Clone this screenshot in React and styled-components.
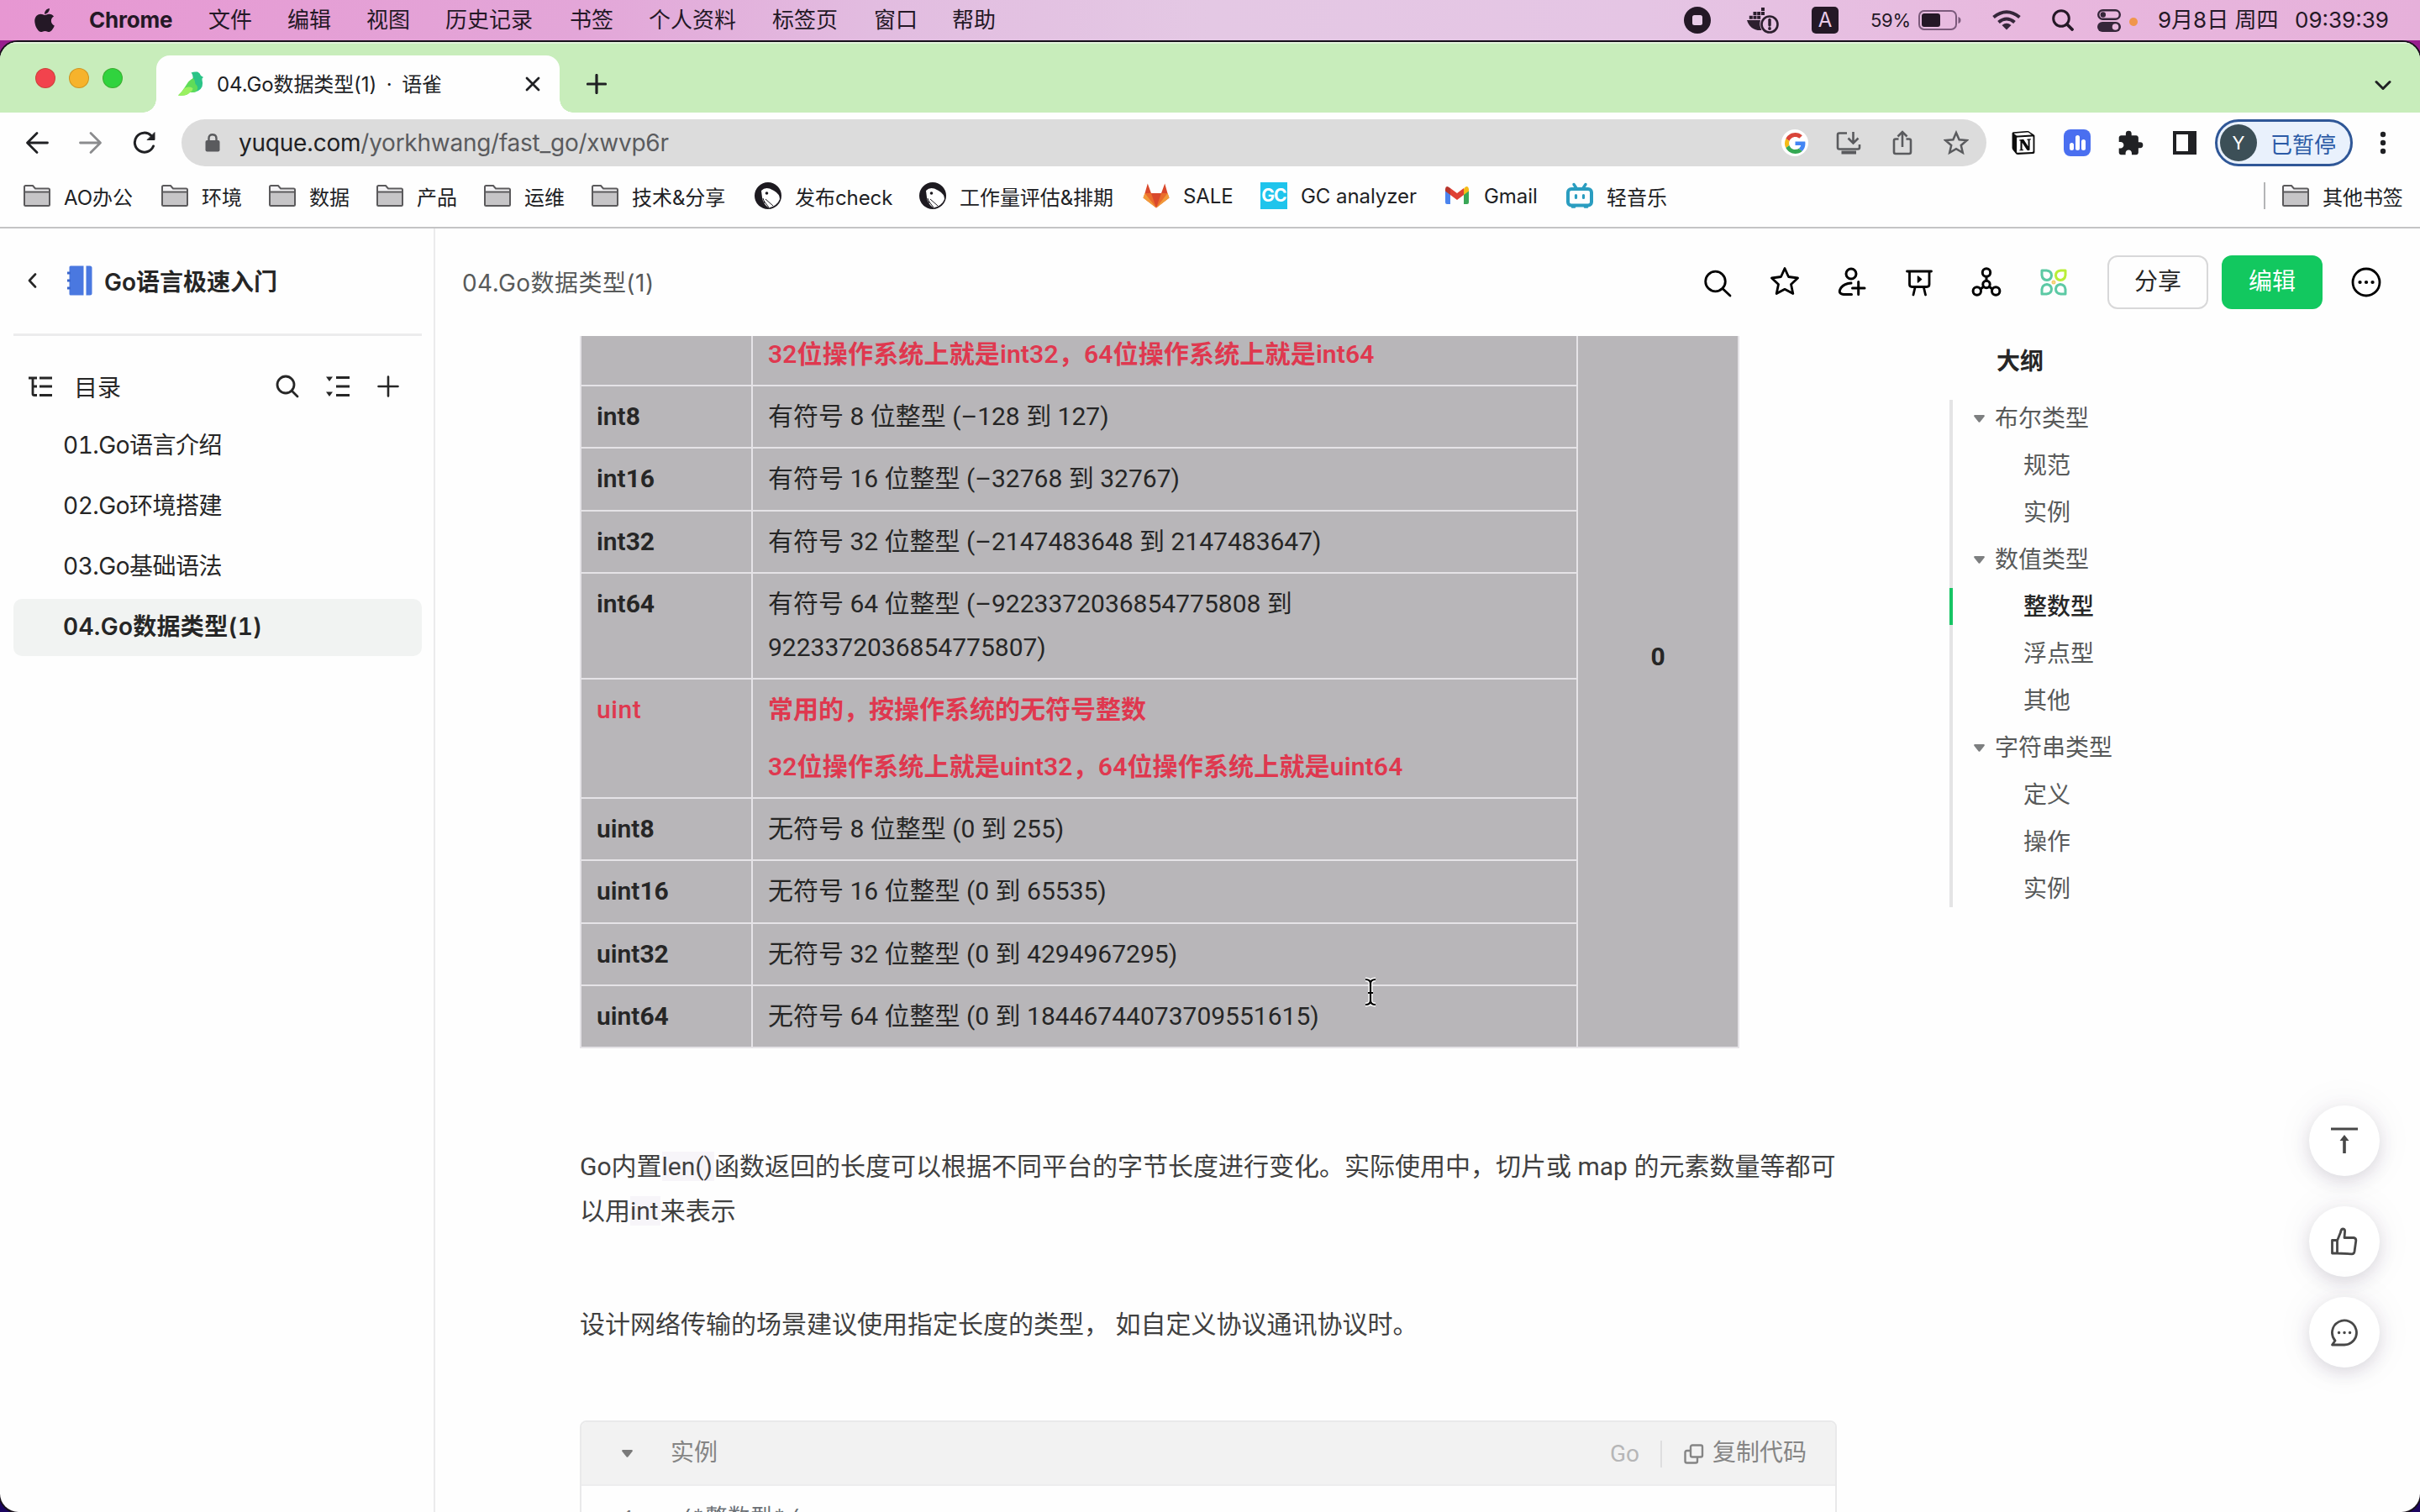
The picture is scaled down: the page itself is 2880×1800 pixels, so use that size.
import React from 'react'
import styled, { createGlobalStyle } from 'styled-components'
import { FaApple } from 'react-icons/fa'
import { SiNotion } from 'react-icons/si'

const GlobalStyle = createGlobalStyle`
    * {
        box-sizing: border-box;
    }
    html, body {
        margin: 0;
        padding: 0;
        overflow: hidden;
    }
    svg {
        display: block;
        flex: none;
    }
`

const ui = `Inter, "Noto Sans CJK SC", sans-serif`
const doc = `Roboto, "Noto Sans CJK SC", sans-serif`

const Desktop = styled.div`
    width: 2880px;
    height: 1800px;
    display: flex;
    flex-direction: column;
    overflow: hidden;
    background: linear-gradient(180deg, #a01496 0%, #8a2f7f 8%, #1e0a5c 60%, #1c0560 100%);
    font-family: ${ui};
    color: #202124;
    white-space: nowrap;
`

/* ---------- mac menu bar ---------- */
const MenuBar = styled.div`
    height: 48px;
    flex: none;
    display: flex;
    align-items: center;
    padding-left: 37px;
    background: linear-gradient(90deg, #e797d2 0%, #e3a6d8 24%, #e2bce0 36%, #e4c8e4 50%, #e5c5e4 68%, #e8b8de 84%, #e6b0da 100%);
    color: #241826;
`
const MenuItem = styled.span`
    width: ${p => p.$w}px;
    font-size: 26px;
    line-height: 46px;
    padding-bottom: 1px;
    font-weight: ${p => (p.$bold ? 700 : 400)};
    letter-spacing: ${p => (p.$bold ? '-0.2px' : 0)};
`
const Tray = styled.div`
    display: flex;
    align-items: center;
    margin-left: auto;
    width: 876px;
    height: 48px;
`
const TrayItem = styled.div`
    flex: none;
    margin-left: ${p => p.$ml || 0}px;
    width: ${p => p.$w}px;
    font-size: ${p => p.$size || 26}px;
    line-height: 46px;
    letter-spacing: ${p => p.$ls || 0}px;
`
const InputSource = styled.div`
    margin-left: 39px;
    width: 32px;
    height: 32px;
    border-radius: 5px;
    background: #241826;
    color: #e8cbe8;
    font-size: 24px;
    line-height: 32px;
    text-align: center;
`
const Dot = styled.div`
    margin-left: 10px;
    margin-top: 4px;
    width: 10px;
    height: 10px;
    border-radius: 50%;
    background: #f0964b;
`

/* ---------- browser chrome ---------- */
const Window = styled.div`
    flex: none;
    margin-top: 2px;
    height: 1750px;
    border-radius: 21px 21px 22px 22px;
    overflow: hidden;
    background: #fefefe;
    box-shadow: 0 0 0 2px #17101a;
    display: flex;
    flex-direction: column;
`
const TabStrip = styled.div`
    height: 84px;
    flex: none;
    display: flex;
    background: #c8edbb;
    border-top: 2px solid #e3f3dc;
`
const Lights = styled.div`
    display: flex;
    gap: 16px;
    padding: 29px 0 0 42px;
    width: 186px;
`
const Light = styled.span`
    width: 24px;
    height: 24px;
    border-radius: 50%;
    background: ${p => p.$c};
    border: 1px solid rgba(90, 60, 0, 0.25);
`
const Tab = styled.div`
    position: relative;
    margin-top: 14px;
    width: 480px;
    height: 68px;
    display: flex;
    align-items: center;
    padding-left: 25px;
    background: #fefefe;
    border-radius: 16px 16px 0 0;

    &::before, &::after {
        content: '';
        position: absolute;
        bottom: 0;
        width: 16px;
        height: 16px;
    }
    &::before {
        left: -16px;
        background: radial-gradient(circle at 0 0, transparent 15.5px, #fefefe 16px);
    }
    &::after {
        right: -16px;
        background: radial-gradient(circle at 100% 0, transparent 15.5px, #fefefe 16px);
    }
`
const TabTitle = styled.span`
    margin-left: 15px;
    width: 366px;
    font-size: 24px;
    letter-spacing: -0.1px;
    word-spacing: 5px;
    padding-bottom: 3px;
`
const NewTab = styled.div`
    padding: 36px 0 0 32px;
`
const TabSearch = styled.div`
    margin-left: auto;
    padding: 43px 34px 0 0;
`
const Toolbar = styled.div`
    height: 72px;
    flex: none;
    display: flex;
    align-items: center;
    padding-left: 12px;
`
const Slot = styled.div`
    width: ${p => p.$w || 64}px;
    height: 56px;
    flex: none;
    display: flex;
    align-items: center;
    justify-content: center;
`
const Omnibox = styled.div`
    width: 2148px;
    height: 56px;
    margin: 0 12px;
    padding: 0 4px 0 28px;
    border-radius: 28px;
    background: #dcdcdc;
    display: flex;
    align-items: center;
    flex: none;
`
const Url = styled.div`
    margin-left: 22px;
    flex: 1;
    font-size: 28px;
    letter-spacing: -0.26px;
    color: #5a5b5e;

    b {
        font-weight: 400;
        color: #202124;
    }
`
const GoogleBadge = styled.div`
    width: 32px;
    height: 32px;
    border-radius: 50%;
    background: #fff;
    display: flex;
    align-items: center;
    justify-content: center;
`
const StatsExtension = styled.div`
    width: 32px;
    height: 32px;
    border-radius: 8px;
    background: #4a6ff0;
    display: flex;
    align-items: flex-end;
    justify-content: center;
    gap: 2px;
    padding-bottom: 7px;

    i {
        width: 5px;
        border-radius: 3px;
        background: #fff;
    }
    i:nth-child(1) { height: 9px; }
    i:nth-child(2) { height: 18px; }
    i:nth-child(3) { height: 13px; }
`
const Profile = styled.div`
    width: 164px;
    height: 56px;
    margin-left: 4px;
    border: 3px solid #2f5797;
    border-radius: 28px;
    background: #e9f1fc;
    color: #2b5aa6;
    display: flex;
    align-items: center;
    padding-left: 3px;
    font-size: 26px;
    gap: 16px;
`
const Avatar = styled.span`
    width: 44px;
    height: 44px;
    border-radius: 50%;
    background: #3c4f57;
    color: #fff;
    font-size: 22px;
    line-height: 44px;
    text-align: center;
`
const Bookmarks = styled.div`
    height: 66px;
    flex: none;
    display: flex;
    align-items: center;
    padding: 0 0 10px 28px;
    border-bottom: 2px solid #c4c4c5;
`
const Bookmark = styled.div`
    width: ${p => p.$w}px;
    height: 40px;
    flex: none;
    display: flex;
    align-items: center;
    gap: 16px;
    font-size: 24px;
    letter-spacing: -0.06px;
`
const GcLogo = styled.span`
    width: 32px;
    height: 32px;
    background: #1fc4ec;
    color: #fff;
    font-size: 21px;
    font-weight: 700;
    line-height: 32px;
    letter-spacing: -1px;
    text-align: center;
`
const OtherBookmarks = styled(Bookmark)`
    margin-left: auto;
    height: 32px;
    border-left: 2px solid #b4b5b6;
    padding-left: 20px;
`

/* ---------- page ---------- */
const Page = styled.div`
    flex: 1;
    display: flex;
    min-height: 0;
`
const Sidebar = styled.div`
    width: 518px;
    flex: none;
    border-right: 2px solid #ebebec;
    padding: 0 14px 0 16px;
    color: #262626;
`
const BookHeader = styled.div`
    height: 128px;
    display: flex;
    align-items: center;
    padding: 0 0 1px 17px;
    border-bottom: 3px solid #ececed;
    font-size: 28px;
    font-weight: 600;

    svg + svg {
        margin: 0 14px 0 36px;
    }
`
const CatalogBar = styled.div`
    height: 74px;
    margin-top: 23px;
    display: flex;
    align-items: center;
    padding: 0 10px 0 17px;
    font-size: 28px;

    span {
        flex: 1;
        margin-left: 25px;
        padding-bottom: 1px;
    }
`
const CatalogIcons = styled.div`
    display: flex;
    align-items: center;
    gap: 31px;
    margin-right: 17px;

    svg:nth-child(-n + 2) {
        margin-left: -1px;
        margin-right: 1px;
    }
`
const CatalogItem = styled.div`
    height: 68px;
    margin-bottom: 4px;
    padding-left: 59px;
    border-radius: 10px;
    font-size: 28px;
    line-height: 67px;
    font-feature-settings: 'tnum';
    letter-spacing: ${p => (p.$active ? 0.3 : -0.5)}px;
    background: ${p => (p.$active ? '#f1f3f2' : 'none')};
    font-weight: ${p => (p.$active ? 600 : 400)};
`
const Main = styled.div`
    position: relative;
    flex: 1;
    display: flex;
    flex-direction: column;
    min-width: 0;
`
const DocHeader = styled.div`
    height: 128px;
    flex: none;
    display: flex;
    align-items: center;
    padding-left: 32px;
    padding-right: 12px;
`
const Crumb = styled.div`
    flex: 1;
    padding-bottom: 3px;
    font-size: 28px;
    letter-spacing: 0.45px;
    color: #585a5a;
`
const Button = styled.div`
    width: 120px;
    height: 64px;
    margin-left: ${p => (p.$primary ? 16 : 24)}px;
    border-radius: 12px;
    border: ${p => (p.$primary ? 'none' : '2px solid #d8d8d9')};
    background: ${p => (p.$primary ? '#12c85f' : '#fefefe')};
    color: ${p => (p.$primary ? '#fff' : '#262626')};
    font-size: 28px;
    line-height: ${p => (p.$primary ? 62 : 58)}px;
    text-align: center;
`
const Body = styled.div`
    flex: 1;
    min-height: 0;
    overflow: hidden;
    display: flex;
    padding-left: 172px;
`
const Article = styled.div`
    width: 1496px;
    flex: none;
    font-family: ${doc};
    font-size: 30px;
    line-height: 52.5px;
    color: #404040;
`
const Table = styled.table`
    width: 1380px;
    table-layout: fixed;
    border-collapse: collapse;
    color: #262626;
    background: #b8b6b9;
`
const Cell = styled.td`
    height: ${p => p.$h}px;
    padding: ${p => (p.$cut ? '0 18px 9px' : '10px 18px 8px')};
    border: 2px solid #e5e3e7;
    border-top: ${p => (p.$cut ? 'none' : '2px solid #e5e3e7')};
    vertical-align: top;
    font-weight: ${p => (p.$bold ? 700 : 400)};
    white-space: normal;
    line-height: 52px;
`
const DefaultCell = styled(Cell)`
    padding-bottom: 82px;
    vertical-align: middle;
    text-align: center;
`
const Line = styled.div`
    color: #df384f;
    font-weight: ${p => p.$weight};
    letter-spacing: ${p => p.$ls || 0}px;
    margin-top: ${p => p.$mt || 0}px;
`
const TypeName = styled.span`
    font-weight: 600;
`
const Paragraph = styled.p`
    margin: ${p => p.$mt}px -8px 0 0;
    white-space: normal;

    mark {
        background: #f7f5f9;
        color: inherit;
        padding-right: 2px;
    }
`
const CodeBlock = styled.div`
    margin-top: 87px;
    height: 300px;
    border: 2px solid #e9e9ea;
    border-radius: 8px 8px 0 0;
`
const CodeHeader = styled.div`
    height: 76px;
    display: flex;
    align-items: center;
    padding: 2px 34px 0 47px;
    background: #f2f2f2;
    border-bottom: 2px solid #ededee;
    border-radius: 6px 6px 0 0;
    font-size: 28px;
    color: #858585;

    span {
        flex: 1;
        margin-left: 44px;
    }
`
const Lang = styled.div`
    height: 32px;
    line-height: 32px;
    padding-right: 25px;
    margin-right: 26px;
    border-right: 2px solid #dededf;
    color: #b6b6b7;
`
const CopyCode = styled.div`
    margin-left: 10px;
`
const CodeLine = styled.div`
    display: flex;
    padding: 13px 0 0 48px;
    font-family: "Liberation Mono", "Noto Sans CJK SC", monospace;
    font-size: 26px;
    line-height: 52px;
    letter-spacing: 0.7px;
    color: #6b7075;

    span {
        width: 67px;
        color: #777;
    }
`
const Outline = styled.div`
    margin-left: 134px;
    color: #585a5a;
    font-size: 28px;
`
const OutlineTitle = styled.div`
    padding-left: 56px;
    height: 76px;
    line-height: 60px;
    font-weight: 700;
    color: #262626;
`
const OutlineList = styled.div`
    height: 604px;
    box-shadow: inset 4px 0 0 #e4e4e5;
`
const OutlineItem = styled.div`
    height: 56px;
    display: flex;
    align-items: center;
    padding: 0 0 16px ${p => (p.$sub ? 88 : 28)}px;
    gap: 11px;
    color: ${p => (p.$active ? '#262626' : 'inherit')};
    font-weight: ${p => (p.$active ? 500 : 400)};
    background: ${p => (p.$active ? 'linear-gradient(#16c464, #16c464) 0 0 / 4px 44px no-repeat' : 'none')};

    svg {
        margin-top: 4px;
    }
`
const FloatButton = styled.div`
    position: absolute;
    right: 48px;
    top: ${p => p.$top}px;
    width: 84px;
    height: 84px;
    border-radius: 50%;
    background: #fff;
    box-shadow: 0 6px 20px rgba(60, 50, 90, 0.16), 0 0 50px rgba(60, 50, 90, 0.06);
    display: flex;
    align-items: center;
    justify-content: center;
`
const TextCursor = styled.svg`
    position: absolute;
    left: 1103px;
    top: 891px;
`

const Stroke = ({ w = 32, h = w, sw = 2.6, color = '#202124', cap = 'round', children }) => (
    <svg width={w} height={h} viewBox={`0 0 ${w} ${h}`} fill="none" stroke={color} strokeWidth={sw} strokeLinecap={cap} strokeLinejoin={cap === 'round' ? 'round' : 'miter'}>
        {children}
    </svg>
)

const Folder = () => (
    <svg width="32" height="26" viewBox="0 0 32 26">
        <path d="M1 4V2.500Q1 1 2.500 1H11L14 4.500H29.500Q31 4.500 31 6V23.500Q31 25 29.500 25H2.500Q1 25 1 23.500Z" fill="#f3f2f4" stroke="#5b5a5c" strokeWidth="2" />
        <path d="M2 9H30V24H2Z" fill="#c6c5c7" />
        <path d="M1 8.500H31" stroke="#5b5a5c" strokeWidth="2" />
    </svg>
)

const Lynx = () => (
    <svg width="32" height="32" viewBox="0 0 32 32">
        <circle cx="16" cy="16" r="16" fill="#1d1a20" />
        <path d="M8 10Q12 5.500 18 7.500L23 10Q30 14 30 20Q27 28 17 30.500Q10 26 9 18Z" fill="#fff" />
        <circle cx="14.500" cy="13" r="1.800" fill="#1d1a20" />
        <path d="M11 22L17 30M13 20L22 28M10 19L12 25" stroke="#1d1a20" strokeWidth="1" />
    </svg>
)

const Gitlab = () => (
    <svg width="32" height="30" viewBox="0 0 32 30">
        <path d="M5.800 0.500L10 12H22L26.200 0.500L29.500 12L16 29.500L2.500 12Z" fill="#d9482c" />
        <path d="M16 29.500L10 12H2.500L0.500 17.500Z" fill="#ea6c2b" />
        <path d="M16 29.500L22 12H29.500L31.500 17.500Z" fill="#ea6c2b" />
        <path d="M16 29.500L0.500 17.500L2.500 12Z" fill="#f19a3a" />
        <path d="M16 29.500L31.500 17.500L29.500 12Z" fill="#f19a3a" />
    </svg>
)

const Gmail = () => (
    <svg width="32" height="24" viewBox="0 0 32 24">
        <path d="M2 4V20Q2 22 4 22H8V10L2 5Z" fill="#4b84ee" />
        <path d="M24 10V22H28Q30 22 30 20V5Z" fill="#3aa757" />
        <path d="M24 4V11L30 6.500V4Q29 -1 25 2.500Z" fill="#f5bb16" />
        <path d="M2 4V6.500L8 11V3L6.500 2Q2.500 -0.500 2 4Z" fill="#b8352c" />
        <path d="M8 3V11L16 17L24 11V3L16 9Z" fill="#df4134" />
    </svg>
)

const Bili = () => (
    <svg width="32" height="32" viewBox="0 0 32 32" fill="none" stroke="#2a9dc0" strokeWidth="4" strokeLinecap="round">
        <rect x="2" y="8" width="28" height="19.500" rx="4" />
        <path d="M9 2.500L12 7M23 2.500L20 7" strokeWidth="3.400" />
        <path d="M11.500 15.500V18.500M20.500 15.500V18.500" strokeWidth="3.200" />
        <path d="M7 29.500H10M22 29.500H25" strokeWidth="2.500" />
    </svg>
)

const GoogleG = () => (
    <svg width="25" height="25" viewBox="0 0 48 48">
        <path fill="#d9453a" d="M24 9.500c3.540 0 6.710 1.220 9.210 3.600l6.850-6.850C35.900 2.380 30.470 0 24 0 14.620 0 6.510 5.380 2.560 13.220l7.980 6.190C12.430 13.720 17.740 9.500 24 9.500z" />
        <path fill="#4285f4" d="M46.980 24.550c0-1.570-.15-3.090-.38-4.550H24v9.020h12.940c-.58 2.960-2.260 5.480-4.780 7.180l7.730 6c4.510-4.180 7.090-10.360 7.090-17.650z" />
        <path fill="#f5bb16" d="M10.530 28.590c-.48-1.450-.76-2.990-.76-4.590s.27-3.140.76-4.590l-7.980-6.190C.92 16.460 0 20.120 0 24c0 3.880.92 7.540 2.560 10.780l7.970-6.190z" />
        <path fill="#34a853" d="M24 48c6.480 0 11.930-2.130 15.890-5.810l-7.730-6c-2.150 1.450-4.920 2.300-8.160 2.300-6.260 0-11.570-4.220-13.470-9.910l-7.980 6.190C6.510 42.620 14.620 48 24 48z" />
    </svg>
)

const Yuque = () => (
    <svg width="32" height="30" viewBox="0 0 32 30">
        <path d="M16.500 1.500Q20 0 24 0.500Q27 1.500 28 5L31 7Q29 8 29.500 10Q32 19 25 23Q21 25.500 15 25Q18 14 18.500 9Q19 4 16.500 1.500Z" fill="#2bc487" />
        <path d="M19 8Q21.500 11 21.500 15Q26 18 23 23.500Q20 25.500 15 25Q10 30 1 28.500Q6 24 9.500 18Q14 10 19 8Z" fill="#5fdc58" />
        <path d="M8 20.500Q13 17 18.500 20Q18 24 15 25Q10 30 1 28.500Q5 25 8 20.500Z" fill="#9af060" />
    </svg>
)

const Triangle = ({ color = '#7d7f80' }) => (
    <svg width="15" height="9" viewBox="0 0 14 9">
        <path d="M1.500 0H12.500Q14 0.500 13 2L8 8.300Q7 9.300 6 8.300L1 2Q0 0.500 1.500 0Z" fill={color} />
    </svg>
)

const menus = [
    ['文件', 94], ['编辑', 94], ['视图', 94], ['历史记录', 148], ['书签', 94],
    ['个人资料', 147], ['标签页', 121], ['窗口', 93], ['帮助', 94],
]

const folders = [
    ['AO办公', 164], ['环境', 128], ['数据', 128], ['产品', 128], ['运维', 128], ['技术&分享', 194],
]

const catalog = ['01.Go语言介绍', '02.Go环境搭建', '03.Go基础语法', '04.Go数据类型(1)']

const rows = [
    { type: 'int', bits: '8', h: 74, text: '有符号 8 位整型 (–128 到 127)' },
    { type: 'int', bits: '16', h: 75, text: '有符号 16 位整型 (–32768 到 32767)' },
    { type: 'int', bits: '32', h: 74, text: '有符号 32 位整型 (–2147483648 到 2147483647)' },
    { type: 'int', bits: '64', h: 126, text: '有符号 64 位整型 (–9223372036854775808 到 9223372036854775807)' },
    { type: 'uint', h: 142, red: ['常用的，按操作系统的无符号整数', '32位操作系统上就是uint32，64位操作系统上就是uint64'] },
    { type: 'uint', bits: '8', h: 74, text: '无符号 8 位整型 (0 到 255)' },
    { type: 'uint', bits: '16', h: 75, text: '无符号 16 位整型 (0 到 65535)' },
    { type: 'uint', bits: '32', h: 74, text: '无符号 32 位整型 (0 到 4294967295)' },
    { type: 'uint', bits: '64', h: 74, text: '无符号 64 位整型 (0 到 18446744073709551615)' },
]

const outline = [
    { text: '布尔类型' }, { text: '规范', sub: true }, { text: '实例', sub: true },
    { text: '数值类型' }, { text: '整数型', sub: true, active: true }, { text: '浮点型', sub: true }, { text: '其他', sub: true },
    { text: '字符串类型' }, { text: '定义', sub: true }, { text: '操作', sub: true }, { text: '实例', sub: true },
]

const SystemMenu = () => (
    <MenuBar>
        <TrayItem $w={69}><FaApple size={32} /></TrayItem>
        <MenuItem $w={142} $bold>Chrome</MenuItem>
        {menus.map(([label, w]) => <MenuItem key={label} $w={w}>{label}</MenuItem>)}
        <Tray>
            <TrayItem $w={32}>
                <svg width="32" height="32"><circle cx="16" cy="16" r="16" fill="#241826" /><rect x="10" y="10" width="12" height="12" rx="2.500" fill="#e8cbe8" /></svg>
            </TrayItem>
            <TrayItem $ml={43} $w={38}>
                <svg width="38" height="32" viewBox="0 0 38 32" fill="#2c1f2e">
                    <path d="M17 1h4v4h-4zM7.500 6h4v4h-4zM12.200 6h4v4h-4zM17 6h4v4h-4zM2.800 10.800h4v4h-4zM7.500 10.800h4v4h-4zM12.200 10.800h4v4h-4z" />
                    <path d="M0 16H16Q14 22 17.500 28Q4 29 0 16Z" />
                    <circle cx="27" cy="21" r="9.500" fill="none" stroke="#2c1f2e" strokeWidth="2.600" />
                    <path d="M27 15.500V22" stroke="#2c1f2e" strokeWidth="3.400" strokeLinecap="round" />
                    <circle cx="27" cy="26" r="1.900" />
                </svg>
            </TrayItem>
            <InputSource>A</InputSource>
            <TrayItem $ml={38} $w={57} $size={22} $ls={-0.3}>59%</TrayItem>
            <TrayItem $w={51}>
                <svg width="51" height="24" viewBox="0 0 51 24">
                    <rect x="1" y="1" width="44" height="22" rx="6" fill="none" stroke="#7b5a7b" strokeWidth="2" />
                    <rect x="4" y="4" width="22" height="16" rx="3" fill="#241826" />
                    <path d="M47.500 8Q50.500 9 50.500 12T47.500 16Z" fill="#7b5a7b" />
                </svg>
            </TrayItem>
            <TrayItem $ml={37} $w={34}>
                <svg width="34" height="24" viewBox="0 0 34 24" fill="none" stroke="#35263a" strokeWidth="4">
                    <path d="M1.500 8.500Q17 -4 32.500 8.500M7.500 14.500Q17 6.500 26.500 14.500" />
                    <path d="M17 23.500L11.500 18Q17 13.500 22.500 18Z" fill="#35263a" stroke="none" />
                </svg>
            </TrayItem>
            <TrayItem $ml={37} $w={26}>
                <Stroke w={26} sw={3} color="#241826"><circle cx="11" cy="11" r="9.300" /><path d="M18 18L24 24" strokeWidth="3.800" /></Stroke>
            </TrayItem>
            <TrayItem $ml={28} $w={28}>
                <svg width="28" height="27" viewBox="0 0 28 27">
                    <rect x="1.200" y="1.200" width="25.600" height="10.600" rx="5.300" fill="none" stroke="#35263a" strokeWidth="2.400" />
                    <circle cx="6.800" cy="6.500" r="3.200" fill="#35263a" />
                    <rect x="0" y="15" width="28" height="12" rx="6" fill="#35263a" />
                    <circle cx="21.500" cy="21" r="3.800" fill="#e8b8de" />
                </svg>
            </TrayItem>
            <Dot />
            <TrayItem $ml={24} $w={163}>9月8日 周四</TrayItem>
            <TrayItem $w={140}>09:39:39</TrayItem>
        </Tray>
    </MenuBar>
)

const BrowserChrome = () => (
    <>
        <TabStrip>
            <Lights><Light $c="#f2434d" /><Light $c="#f6b32c" /><Light $c="#30d33e" /></Lights>
            <Tab>
                <Yuque />
                <TabTitle>04.Go数据类型(1) · 语雀</TabTitle>
                <Stroke w={20} sw={2.8}><path d="M3 3L17 17M17 3L3 17" /></Stroke>
            </Tab>
            <NewTab><Stroke w={24} sw={3.2}><path d="M12 1.500V22.500M1.500 12H22.500" /></Stroke></NewTab>
            <TabSearch><Stroke w={20} h={14} sw={3}><path d="M2 2.500L10 10.500L18 2.500" /></Stroke></TabSearch>
        </TabStrip>
        <Toolbar>
            <Slot><Stroke w={28} sw={2.8}><path d="M14 2.500L2.500 14L14 25.500M3 14H26.500" /></Stroke></Slot>
            <Slot><Stroke w={28} sw={2.8} color="#8b8c8e"><path d="M14 2.500L25.500 14L14 25.500M25 14H1.500" /></Stroke></Slot>
            <Slot>
                <Stroke w={28} sw={3}><path d="M24.500 18A11.500 11.500 0 1 1 22 5.500L24.500 8" /><path d="M26 2V10.500H17.500Z" fill="#202124" strokeWidth="1" /></Stroke>
            </Slot>
            <Omnibox>
                <svg width="18" height="22" viewBox="0 0 18 22">
                    <rect x="0.500" y="8" width="17" height="13.500" rx="2" fill="#5a5b5e" />
                    <path d="M4.500 9V5.500Q4.500 1.200 9 1.200T13.500 5.500V9" fill="none" stroke="#5a5b5e" strokeWidth="2.400" />
                </svg>
                <Url><b>yuque.com</b>/yorkhwang/fast_go/xwvp6r</Url>
                <Slot><GoogleBadge><GoogleG /></GoogleBadge></Slot>
                <Slot>
                    <Stroke w={30} h={28} sw={2.6} color="#5a5b5e" cap="butt">
                        <path d="M13 2.500H4Q2 2.500 2 4.500V19.500Q2 21.500 4 21.500H26Q28 21.500 28 19.500V16" />
                        <path d="M20.500 1V14M14.500 8.500L20.500 14.500L26.500 8.500" />
                        <path d="M6.500 25.500H24" strokeWidth="4" />
                    </Stroke>
                </Slot>
                <Slot>
                    <Stroke w={24} h={30} sw={2.6} color="#5a5b5e" cap="butt">
                        <path d="M7.500 10.500H4Q2 10.500 2 12.500V26Q2 28 4 28H20Q22 28 22 26V12.500Q22 10.500 20 10.500H16.500" />
                        <path d="M12 20V3M6.500 7.500L12 2L17.500 7.500" />
                    </Stroke>
                </Slot>
                <Slot>
                    <Stroke w={30} sw={2.5} color="#5a5b5e" cap="butt"><path d="M15 3L18.600 11.300L27.600 12.100L20.800 18L22.800 26.800L15 22.200L7.200 26.800L9.200 18L2.400 12.100L11.400 11.300Z" /></Stroke>
                </Slot>
            </Omnibox>
            <Slot><SiNotion size={28} color="#0c0c0c" /></Slot>
            <Slot><StatsExtension><i /><i /><i /></StatsExtension></Slot>
            <Slot>
                <svg width="30" height="30" viewBox="1.500 0.500 22 22" fill="#202124"><path d="M20.500 11H19V7c0-1.100-.9-2-2-2h-4V3.500a2.500 2.500 0 0 0-5 0V5H4c-1.100 0-1.990.9-1.990 2v3.800H3.500c1.490 0 2.700 1.210 2.700 2.700s-1.210 2.700-2.700 2.700H2V20c0 1.100.9 2 2 2h3.800v-1.500c0-1.490 1.210-2.700 2.700-2.700s2.700 1.210 2.700 2.700V22H17c1.100 0 2-.9 2-2v-4h1.500a2.500 2.500 0 0 0 0-5z" /></svg>
            </Slot>
            <Slot>
                <svg width="28" height="28"><path d="M0 0H28V28H0ZM4 4V24H18V4Z" fill="#202124" fillRule="evenodd" /></svg>
            </Slot>
            <Profile><Avatar>Y</Avatar>已暂停</Profile>
            <Slot $w={72}>
                <svg width="8" height="28" fill="#202124"><circle cx="4" cy="4" r="3.200" /><circle cx="4" cy="14" r="3.200" /><circle cx="4" cy="24" r="3.200" /></svg>
            </Slot>
        </Toolbar>
        <Bookmarks>
            {folders.map(([label, w]) => <Bookmark key={label} $w={w}><Folder />{label}</Bookmark>)}
            <Bookmark $w={196}><Lynx />发布check</Bookmark>
            <Bookmark $w={266}><Lynx />工作量评估&amp;排期</Bookmark>
            <Bookmark $w={140}><Gitlab />SALE</Bookmark>
            <Bookmark $w={218}><GcLogo>GC</GcLogo>GC analyzer</Bookmark>
            <Bookmark $w={146}><Gmail />Gmail</Bookmark>
            <Bookmark $w={160}><Bili />轻音乐</Bookmark>
            <OtherBookmarks $w={186}><Folder />其他书签</OtherBookmarks>
        </Bookmarks>
    </>
)

const Catalog = () => (
    <Sidebar>
        <BookHeader>
            <Stroke w={11} h={18} sw={2.6} color="#262626"><path d="M9 1.500L2 9L9 16.500" /></Stroke>
            <svg width="30" height="36" viewBox="0 0 30 36">
                <path d="M4 0.500H19.500V35.500H4Q2.500 35.500 2.500 34V2Q2.500 0.500 4 0.500Z" fill="#4a78e0" />
                <path d="M22.500 0.500H27Q29.500 0.500 29.500 3V33Q29.500 35.500 27 35.500H22.500Z" fill="#4a78e0" />
                <path d="M0 9H4M0 18H4M0 27H4" stroke="#3a66cc" strokeWidth="3" />
            </svg>
            Go语言极速入门
        </BookHeader>
        <CatalogBar>
            <Stroke w={30} h={26} sw={2.8} color="#262626" cap="butt"><path d="M1 3H11M6 3V22Q6 23.500 8 23.500H11M6 13H11M14 3H29M14 13H29M14 23.500H29" /></Stroke>
            <span>目录</span>
            <CatalogIcons>
                <Stroke w={28} sw={2.8} color="#262626"><circle cx="12" cy="12" r="10" /><path d="M19.500 19.500L26 26" /></Stroke>
                <svg width="30" height="26" viewBox="0 0 30 26">
                    <path d="M1 1.500H9L5 7ZM1 19.500H9L5 25Z" fill="#262626" />
                    <path d="M13 2.500H29M13 13H29M13 23.500H29" stroke="#262626" strokeWidth="2.800" />
                </svg>
                <Stroke w={26} sw={2.6} color="#262626"><path d="M13 1.500V24.500M1.500 13H24.500" /></Stroke>
            </CatalogIcons>
        </CatalogBar>
        {catalog.map((title, i) => <CatalogItem key={title} $active={i === 3}>{title}</CatalogItem>)}
    </Sidebar>
)

const DocToolbar = () => (
    <DocHeader>
        <Crumb>04.Go数据类型(1)</Crumb>
        <Slot $w={80}><Stroke w={36} sw={2.8} color="#000"><circle cx="15.500" cy="17" r="11.800" /><path d="M24.500 26L33 34" /></Stroke></Slot>
        <Slot $w={80}><Stroke w={36} sw={2.8} color="#000"><path d="M18 1.500L22.500 11.500L33.500 13L25.500 20.500L27.800 31.500L18 26.300L8.200 31.500L10.500 20.500L2.500 13L13.500 11.500Z" /></Stroke></Slot>
        <Slot $w={80}>
            <Stroke w={36} sw={3} color="#000"><circle cx="17" cy="8" r="6" /><path d="M17 19Q9 19.500 5 24.500Q0.500 31.500 8 32.500H17.500M18.500 25H33M25.700 17.500V32.500" /></Stroke>
        </Slot>
        <Slot $w={80}>
            <Stroke w={36} sw={2.8} color="#000"><path d="M3.500 5H32.500M6.500 5V20.500Q6.500 23.500 9.500 23.500H27Q30 23.500 30 20.500V5M13 24.500L11 33M23.500 24.500L25.500 33" /><path d="M16.500 11L20.500 14.500L16.500 18Z" fill="#000" strokeWidth="1.500" /></Stroke>
        </Slot>
        <Slot $w={80}>
            <Stroke w={36} sw={3} color="#000"><circle cx="18" cy="6.500" r="4.700" /><circle cx="18" cy="20.500" r="4.200" /><circle cx="6.800" cy="28.500" r="4.700" /><circle cx="29.200" cy="28.500" r="4.700" /><path d="M18 11.500V16M14.500 23.500L11 26M21.500 23.500L25 26" /></Stroke>
        </Slot>
        <Slot $w={80}>
            <Stroke w={32} sw={3} color="#5cc9a4">
                <path d="M2 2H7.500Q13.500 2.500 13.500 8Q13 13 8 13.500Q2.500 13 2 7.500Z" />
                <path d="M30 2H24.500Q18.500 2.500 18.500 8Q19 13 24 13.500Q29.500 13 30 7.500Z" stroke="#b9ee38" />
                <path d="M2 30H7.500Q13.500 29.500 13.500 24Q13 19 8 18.500Q2.500 19 2 24.500Z" />
                <path d="M30 30H24.500Q18.500 29.500 18.500 24Q19 19 24 18.500Q29.500 19 30 24.500Z" />
                <circle cx="16" cy="16" r="1" stroke="#f3cf6c" />
            </Stroke>
        </Slot>
        <Button>分享</Button>
        <Button $primary>编辑</Button>
        <Slot $w={104}>
            <Stroke w={36} sw={2.8} color="#000"><circle cx="18" cy="18" r="16" /><path d="M10.500 18H10.600M18 18H18.100M25.500 18H25.600" strokeWidth="4.200" /></Stroke>
        </Slot>
    </DocHeader>
)

const TypeTable = () => (
    <Table>
        <colgroup><col width="204" /><col width="982" /><col /></colgroup>
        <tbody>
            <tr>
                <Cell $h={59} $cut />
                <Cell $h={59} $cut><Line $weight={600} $ls={0.17} $mt={-4}>32位操作系统上就是int32，64位操作系统上就是int64</Line></Cell>
                <DefaultCell $cut $bold rowSpan={10}>0</DefaultCell>
            </tr>
            {rows.map(({ type, bits, h, text, red }) => (
                <tr key={type + bits}>
                    <Cell $h={h} $bold>
                        {bits ? <><TypeName>{type}</TypeName>{bits}</> : <Line $weight={500} $ls={0.6}>{type}</Line>}
                    </Cell>
                    <Cell $h={h}>
                        {red
                            ? red.map((line, i) => <Line key={line} $weight={600} $ls={i * 0.17} $mt={i * 16}>{line}</Line>)
                            : text}
                    </Cell>
                </tr>
            ))}
        </tbody>
    </Table>
)

const DocArticle = () => (
    <Article>
        <TypeTable />
        <Paragraph $mt={115}>
            Go内置<mark>len()</mark>函数返回的长度可以根据不同平台的字节长度进行变化。实际使用中，切片或 map 的元素数量等都可以用<mark>int</mark>来表示
        </Paragraph>
        <Paragraph $mt={83}>设计网络传输的场景建议使用指定长度的类型， 如自定义协议通讯协议时。</Paragraph>
        <CodeBlock>
            <CodeHeader>
                <Triangle color="#7a7a7a" />
                <span>实例</span>
                <Lang>Go</Lang>
                <Stroke w={24} sw={2.4} color="#858585"><rect x="8" y="1.500" width="14" height="14" rx="2" /><path d="M7 8H3.500Q1.500 8 1.500 10V20.500Q1.500 22.500 3.500 22.500H14Q16 22.500 16 20.500V16.500" /></Stroke>
                <CopyCode>复制代码</CopyCode>
            </CodeHeader>
            <CodeLine><span>1</span>/*整数型*/</CodeLine>
        </CodeBlock>
    </Article>
)

const DocOutline = () => (
    <Outline>
        <OutlineTitle>大纲</OutlineTitle>
        <OutlineList>
            {outline.map((item, i) => (
                <OutlineItem key={i} $sub={item.sub} $active={item.active}>
                    {!item.sub && <Triangle />}
                    {item.text}
                </OutlineItem>
            ))}
        </OutlineList>
    </Outline>
)

export default function App() {
    return (
        <Desktop>
            <GlobalStyle />
            <SystemMenu />
            <Window>
                <BrowserChrome />
                <Page>
                    <Catalog />
                    <Main>
                        <DocToolbar />
                        <Body>
                            <DocArticle />
                            <DocOutline />
                        </Body>
                        <FloatButton $top={1044}>
                            <svg width="34" height="34" viewBox="0 0 34 34" fill="#484848"><path d="M1 1.500H33V4.500H1ZM17 10L22.500 17H18.800V32H15.200V17H11.500Z" /></svg>
                        </FloatButton>
                        <FloatButton $top={1164}>
                            <Stroke w={34} sw={2.8} color="#484848"><path d="M2.500 15.500H8.500V31H2.500ZM8.500 16L12.500 6Q13 2 15.500 2T17.500 6L17 12.500H28Q31 13 30.800 16L29 29Q28.500 31.800 26 31.800L8.500 31" /></Stroke>
                        </FloatButton>
                        <FloatButton $top={1272}>
                            <Stroke w={34} sw={2.8} color="#484848"><path d="M6 27A14.500 14.500 0 1 1 17 32H2.500Z" /><path d="M10.500 17.500H10.600M17 17.500H17.100M23.500 17.500H23.600" strokeWidth="3.400" /></Stroke>
                        </FloatButton>
                        <TextCursor width="20" height="36" viewBox="0 0 20 36" fill="none">
                            <path d="M4 3Q10 3 10 8Q10 3 16 3M4 33Q10 33 10 28Q10 33 16 33M10 8V28M7 19H13" stroke="#fff" strokeWidth="5" />
                            <path d="M4 3Q10 3 10 8Q10 3 16 3M4 33Q10 33 10 28Q10 33 16 33M10 8V28M7 19H13" stroke="#000" strokeWidth="2.200" />
                        </TextCursor>
                    </Main>
                </Page>
            </Window>
        </Desktop>
    )
}
